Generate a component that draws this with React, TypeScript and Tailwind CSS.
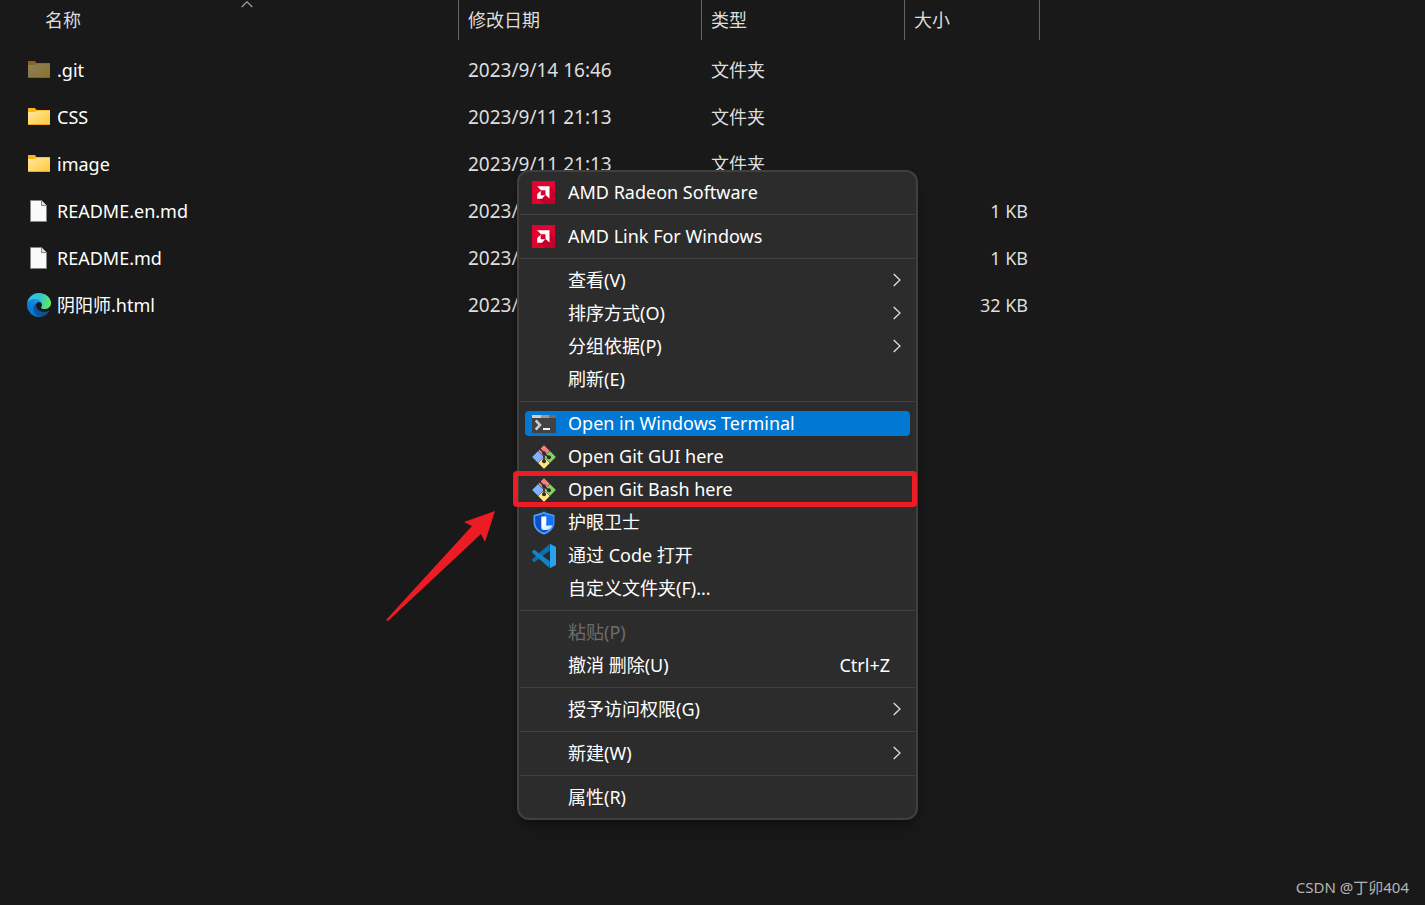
import type { ReactNode } from "react";
import clsx from "clsx";

const FolderIcon = ({ hidden }: { hidden?: boolean }) => (
  <svg viewBox="0 0 22 17" className={clsx("h-[17px] w-[22px]", hidden && "opacity-50")} aria-hidden="true">
    <defs>
      <linearGradient id="folder" x1="0" y1="0" x2="1" y2="1">
        <stop offset="0" stopColor="#ffe8a0" />
        <stop offset="1" stopColor="#ffc937" />
      </linearGradient>
    </defs>
    <path d="M0 0H7L8.500 2H22V6H0Z" fill="#fbb416" />
    <path d="M0 4H7L9 2.700H22V17H0Z" fill="url(#folder)" />
    <path d="M0 16H22V17H0Z" fill="#efa91a" />
  </svg>
);

const FileIcon = () => (
  <svg viewBox="0 0 18 22" className="h-[22px] w-[18px]" aria-hidden="true">
    <path d="M.5.5H11.500L16.500 5.500V21.500H.5Z" fill="#fafafa" stroke="#858585" />
    <path d="M11.500.5V5.500H16.500" fill="#e4e4e4" stroke="#858585" />
  </svg>
);

const EdgeIcon = () => (
  <svg viewBox="0 0 256 256" className="size-6" aria-hidden="true">
    <defs>
      <linearGradient id="edgeDark" x1="63" y1="177" x2="242" y2="177" gradientUnits="userSpaceOnUse">
        <stop offset="0" stopColor="#0c59a4" />
        <stop offset="1" stopColor="#114a8b" />
      </linearGradient>
      <linearGradient id="edgeBlue" x1="150" y1="90" x2="45" y2="240" gradientUnits="userSpaceOnUse">
        <stop offset="0" stopColor="#1b9de2" />
        <stop offset=".5" stopColor="#0a7fd6" />
        <stop offset="1" stopColor="#0078d4" />
      </linearGradient>
      <linearGradient id="edgeGreen" x1="20" y1="60" x2="250" y2="130" gradientUnits="userSpaceOnUse">
        <stop offset="0" stopColor="#35c1f1" />
        <stop offset=".45" stopColor="#2ec6cf" />
        <stop offset="1" stopColor="#66eb5a" />
      </linearGradient>
    </defs>
    <path
      fill="url(#edgeDark)"
      d="M231 190.500c-3.400 1.800-6.900 3.400-10.500 4.700a101.700 101.700 0 0 1-35.900 6.500c-47.300 0-88.500-32.500-88.500-74.300a31.500 31.500 0 0 1 16.400-27.300c-42.800 1.800-53.800 46.400-53.800 72.500 0 73.900 68.100 81.400 82.800 81.400 7.900 0 19.800-2.300 27-4.600l1.300-.4a128.300 128.300 0 0 0 66.600-52.800 4 4 0 0 0-5.400-5.700Z"
    />
    <path
      fill="url(#edgeBlue)"
      d="M105.700 241.400a79.200 79.200 0 0 1-22.700-21.300 80.700 80.700 0 0 1 29.500-120c3.200-1.500 8.500-4.100 15.600-4a32.400 32.400 0 0 1 25.700 13 31.900 31.900 0 0 1 6.300 18.700c0-.2 24.500-79.600-80-79.600C36.200 48.200.1 89.900.1 126.400a130.100 130.100 0 0 0 12.100 56 128 128 0 0 0 156.400 67.100 75.500 75.500 0 0 1-62.800-8Z"
    />
    <path
      fill="url(#edgeGreen)"
      d="M152.300 148.900c-.9 1-3.300 2.500-3.300 5.700 0 2.600 1.700 5.200 4.800 7.300 14.400 10.100 41.700 8.700 41.800 8.700a59.600 59.600 0 0 0 30.300-8.300 61.400 61.400 0 0 0 30.400-52.900c.3-22.400-8-37.300-11.300-43.900C223.800 23.900 177.700 0 127.600 0A128 128 0 0 0 0 126.200C.5 89.700 36.800 60.200 80 60.200c3.500 0 23.500.3 42 10.100 16.300 8.500 24.900 18.900 30.900 29.200 6.100 10.600 7.200 24.100 7.200 29.500 0 5.300-2.700 13.200-7.800 19.900Z"
    />
  </svg>
);

const AmdIcon = () => (
  <svg viewBox="0 0 23 23" className="size-[23px]" aria-hidden="true">
    <path d="M0 0H23V23H0Z" fill="#e0032f" />
    <path d="M6 17L17.500 6L23 11.500V23H12Z" fill="#c4002a" />
    <path d="M5.200 5.200H17.500V17.500L13.500 14V9.300H9Z" fill="#fff" />
    <path d="M8.700 9.800V14.300H13.200L10 17.700H5.200V13Z" fill="#fff" />
  </svg>
);

const TerminalIcon = () => (
  <svg viewBox="0 0 24 18" className="h-[18px] w-6" aria-hidden="true">
    <path d="M0 0H24V18H0Z" fill="#424242" />
    <path d="M0 0H9V3H0Z" fill="#cfcfcf" />
    <path d="M9 0H17V3H9Z" fill="#9a9a9a" />
    <path d="M17 0H24V3H17Z" fill="#6f6f6f" />
    <path d="M3.700 5.300L8 10L3.700 14.700" fill="none" stroke="#cccccc" strokeWidth="2.600" />
    <path d="M11 13H18V15H11Z" fill="#f2f2f2" />
  </svg>
);

const GitIcon = () => (
  <svg viewBox="0 0 24 24" className="size-6" aria-hidden="true">
    <path d="M12 0L18 6L12 12L6 6Z" fill="#f28080" stroke="#2c2c2c" strokeWidth=".3" />
    <path d="M6 6L12 12L6 18L0 12Z" fill="#80b3ff" stroke="#2c2c2c" strokeWidth=".3" />
    <path d="M18 6L24 12L18 18L12 12Z" fill="#85d365" stroke="#2c2c2c" strokeWidth=".3" />
    <path d="M12 12L18 18L12 24L6 18Z" fill="#ffe680" stroke="#2c2c2c" strokeWidth=".3" />
    <path d="M7.500 3.500L12 8V16M12 8L16.500 12.300" fill="none" stroke="#2c2c2c" strokeWidth="1.500" />
    <circle cx="12" cy="8.200" r="1.900" fill="#2c2c2c" />
    <circle cx="12" cy="16.300" r="2" fill="#2c2c2c" />
    <circle cx="17" cy="12.300" r="2" fill="#2c2c2c" />
  </svg>
);

const ShieldIcon = () => (
  <svg viewBox="0 0 24 24" className="size-6" aria-hidden="true">
    <defs>
      <linearGradient id="shieldLetter" x1="0" y1="0" x2="1" y2="1">
        <stop offset=".3" stopColor="#fff" />
        <stop offset="1" stopColor="#bcdcff" />
      </linearGradient>
    </defs>
    <path d="M12 .5C15 2.300 19 2.800 22.500 4V11C22.500 17 18.500 21.500 12 23.500C5.500 21.500 1.500 17 1.500 11V4C5 2.800 9 2.300 12 .5Z" fill="#4b9dff" />
    <path d="M12 2.500C14.500 4 17.500 4.500 20.500 5.200V11C20.500 16 17.500 19.500 12 21.500C6.500 19.500 3.200 16 3.200 11V5.200C6.200 4.500 9.500 4 12 2.500Z" fill="#0c4fc8" />
    <path d="M12 2.500C15 4.200 18 4.400 21.500 5.200V11C21.500 13.500 20.700 15.700 19.300 17.500L12 10Z" fill="#1673f5" />
    <path d="M9.300 5.500H14.300V14.500H20.500C19.500 17.300 17.300 19 14 19H11.500Q9.300 19 9.300 16.800Z" fill="url(#shieldLetter)" />
  </svg>
);

const CodeIcon = () => (
  <svg viewBox="0 0 24 24" className="size-6" aria-hidden="true">
    <path d="M17.200.3L.3 15.300C-.1 15.700-.1 16.200.2 16.600L1.300 17.800C1.700 18.200 2.200 18.200 2.600 17.900L18 6.600Z" fill="#0b6fb0" />
    <path d="M17.200 23.700L.3 8.700C-.1 8.300-.1 7.800.2 7.400L1.300 6.200C1.700 5.800 2.200 5.800 2.600 6.100L18 17.400Z" fill="#1484ca" />
    <path d="M17.200 23.700C17.800 24 18.200 24 18.700 23.700L23.300 21.500C23.800 21.200 24 20.800 24 20.300V3.700C24 3.200 23.800 2.800 23.300 2.500L18.700.3C18.200 0 17.800 0 17.200.3C17.700.1 18 .5 18 1V23C18 23.500 17.700 23.900 17.200 23.700Z" fill="#27a3ee" />
  </svg>
);

const Chevron = () => (
  <svg viewBox="0 0 8 14" className="mr-[9px] mb-0.5 h-[14px] w-2" aria-hidden="true">
    <path d="M.7 1L7 7L.7 13" fill="none" stroke="#e6e6e6" strokeWidth="1.200" />
  </svg>
);

interface FileEntry {
  name: string;
  date: string;
  type: string;
  size: string;
  icon: ReactNode;
}

const files: FileEntry[] = [
  { name: ".git", date: "2023/9/14 16:46", type: "文件夹", size: "", icon: <FolderIcon hidden /> },
  { name: "CSS", date: "2023/9/11 21:13", type: "文件夹", size: "", icon: <FolderIcon /> },
  { name: "image", date: "2023/9/11 21:13", type: "文件夹", size: "", icon: <FolderIcon /> },
  { name: "README.en.md", date: "2023/", type: "", size: "1 KB", icon: <FileIcon /> },
  { name: "README.md", date: "2023/", type: "", size: "1 KB", icon: <FileIcon /> },
  { name: "阴阳师.html", date: "2023/", type: "", size: "32 KB", icon: <EdgeIcon /> },
];

interface MenuEntry {
  label: string;
  icon?: ReactNode;
  submenu?: boolean;
  shortcut?: string;
  disabled?: boolean;
  active?: boolean;
  marked?: boolean;
}

// Each inner list is a group, groups are split by a line
const menuGroups: MenuEntry[][] = [
  [{ label: "AMD Radeon Software", icon: <AmdIcon /> }],
  [{ label: "AMD Link For Windows", icon: <AmdIcon /> }],
  [
    { label: "查看(V)", submenu: true },
    { label: "排序方式(O)", submenu: true },
    { label: "分组依据(P)", submenu: true },
    { label: "刷新(E)" },
  ],
  [
    { label: "Open in Windows Terminal", icon: <TerminalIcon />, active: true },
    { label: "Open Git GUI here", icon: <GitIcon /> },
    { label: "Open Git Bash here", icon: <GitIcon />, marked: true },
    { label: "护眼卫士", icon: <ShieldIcon /> },
    { label: "通过 Code 打开", icon: <CodeIcon /> },
    { label: "自定义文件夹(F)..." },
  ],
  [
    { label: "粘贴(P)", disabled: true },
    { label: "撤消 删除(U)", shortcut: "Ctrl+Z" },
  ],
  [{ label: "授予访问权限(G)", submenu: true }],
  [{ label: "新建(W)", submenu: true }],
  [{ label: "属性(R)" }],
];

const MenuItem = ({ item }: { item: MenuEntry }) => (
  <li className="relative py-1">
    <button
      type="button"
      disabled={item.disabled}
      className={clsx(
        "flex h-[25px] w-full items-center rounded pl-[7px] text-left whitespace-nowrap",
        item.active && "bg-[#0078d4]",
        item.disabled ? "text-[#6d6d6d]" : "text-white"
      )}
    >
      <span className="mr-3 flex w-6 shrink-0">{item.icon}</span>
      <span className="flex-1 pb-0.5">{item.label}</span>
      {item.shortcut && <span className="mr-5 pb-0.5">{item.shortcut}</span>}
      {item.submenu && <Chevron />}
    </button>
    {item.marked && (
      <div className="pointer-events-none absolute -top-0.5 -right-[7px] -bottom-px -left-3 rounded-sm border-[5px] border-[#ed1c24]" />
    )}
  </li>
);

const ContextMenu = () => (
  <div className="absolute top-[170px] left-[517px] w-[401px] rounded-xl border-2 border-[#404040] bg-[#2c2c2c] py-1 shadow-lg shadow-black/30">
    {menuGroups.map((group, index) => (
      <div key={index}>
        {index > 0 && <hr className="mx-px my-[5px] border-[#414141]" />}
        <ul className="px-1.5">
          {group.map((item) => (
            <MenuItem key={item.label} item={item} />
          ))}
        </ul>
      </div>
    ))}
  </div>
);

const FileTable = () => (
  <table className="w-[1040px] table-fixed border-separate border-spacing-0 text-left">
    <colgroup>
      <col className="w-[459px]" />
      <col className="w-[243px]" />
      <col className="w-[203px]" />
      <col className="w-[135px]" />
    </colgroup>
    <thead className="text-[#dedede]">
      <tr className="h-10">
        <th className="relative border-r border-[#636363] p-0 pl-[45px] font-normal">
          名称
          <svg viewBox="0 0 12 7" className="absolute top-px left-[241px] h-[7px] w-3" aria-hidden="true">
            <path d="M.7 6L6 .8L11.300 6" fill="none" stroke="#a8a8a8" strokeWidth="1.100" />
          </svg>
        </th>
        <th className="border-r border-[#636363] p-0 pl-[9px] font-normal">修改日期</th>
        <th className="border-r border-[#636363] p-0 pl-[9px] font-normal">类型</th>
        <th className="border-r border-[#636363] p-0 pl-[9px] font-normal">大小</th>
      </tr>
    </thead>
    <tbody className="text-[#dedede]">
      <tr className="h-1.5" aria-hidden="true" />
      {files.map((file) => (
        <tr key={file.name} className="h-[47px]">
          <td className="p-0 pl-[27px] text-white">
            <div className="flex items-center gap-1.5">
              <span className="flex w-6 justify-center">{file.icon}</span>
              {file.name}
            </div>
          </td>
          <td className="p-0 pl-[9px] text-[19px]">{file.date}</td>
          <td className="p-0 pl-[9px]">{file.type}</td>
          <td className="p-0 pr-3 text-right">{file.size}</td>
        </tr>
      ))}
    </tbody>
  </table>
);

const App = () => {
  return (
    <div className="relative flex min-h-screen flex-col overflow-hidden bg-[#191919] font-['Noto_Sans','Noto_Sans_CJK_SC',sans-serif] text-lg leading-6">
      <FileTable />
      <ContextMenu />
      <svg viewBox="0 0 110 111" className="absolute top-[511px] left-[386px] h-[111px] w-[110px]" aria-hidden="true">
        <path d="M109 0L99 31L95 23L2 110L0 109L86 15L78 11Z" fill="#ed1c24" />
      </svg>
      <footer className="mt-auto px-4 pb-1.5 text-right text-[15px] leading-6 text-[#b4b4b4]">CSDN @丁卯404</footer>
    </div>
  );
};

export default App;
